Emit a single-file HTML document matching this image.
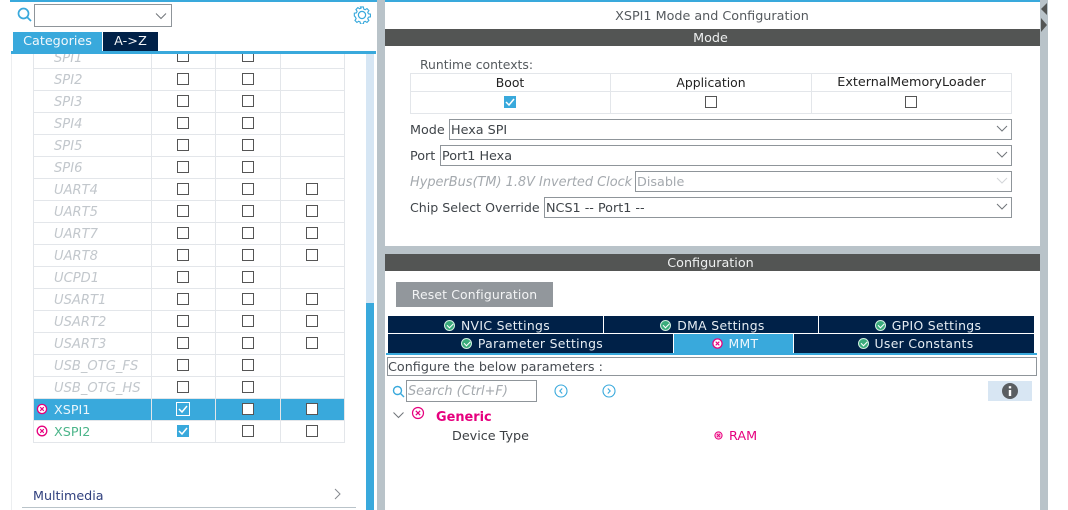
<!DOCTYPE html>
<html><head><meta charset="utf-8">
<style>
html,body{margin:0;padding:0;background:#fff}
#p{position:relative;width:1068px;height:510px;overflow:hidden;background:#fff;font-family:"DejaVu Sans",sans-serif;font-size:12.75px;color:#3f4449}
#p div,#p svg,#p span.a{position:absolute}
.t{white-space:nowrap;line-height:16px}
.r{left:33px;width:312px;height:1px;background:#e3e6ea}
.v{width:1px;background:#e3e6ea;top:46px;height:397px}
.c{width:10px;height:10px;border:1px solid #555;box-sizing:content-box;background:#fff}
.l{left:54px;font-style:italic;color:#c2c7cc;white-space:nowrap;line-height:18px;font-size:13.1px}
.sel{box-sizing:border-box;border:1px solid #8f959a;background:#fff;height:21px;padding:0 0 0 1px;line-height:21px;white-space:nowrap;color:#3f4449}
.tab{background:#002148;color:#e6edf3;text-align:center;line-height:20px;height:17px;white-space:nowrap;font-size:12.4px;letter-spacing:.33px;box-sizing:border-box;padding-left:3px}
.hd{background:#535554;color:#eef0f0;text-align:center;left:385px;width:655px;height:17px;line-height:20px;text-indent:-4px;overflow:hidden}
.ck{display:inline-block;position:relative;top:1px;width:11px;height:11px;border-radius:50%;background:#3aab7b;margin-right:6px;border:1px solid #cfeee0;box-sizing:border-box}
.ck:after{content:"";position:absolute;left:2px;top:1.5px;width:5px;height:2.5px;border-left:1.4px solid #fff;border-bottom:1.4px solid #fff;transform:rotate(-45deg)}
</style></head><body><div id="p">

<!-- bars -->
<div style="left:10px;top:0;width:367px;height:2px;background:#39a9dc"></div>
<div style="left:385px;top:0;width:655px;height:2px;background:#39a9dc"></div>
<div style="left:377px;top:0;width:8px;height:510px;background:#b9c3c9"></div>
<div style="left:1040px;top:0;width:8px;height:510px;background:#b9c3c9"></div>
<svg style="left:1040px;top:2px" width="8" height="32"><path d="M7 1V13L1 7Z" fill="#535554"/><path d="M1 16V30L7 23Z" fill="#535554"/></svg>

<!-- left top -->
<svg style="left:16px;top:6px" width="17" height="17" fill="none" stroke="#39a9dc" stroke-width="1.7"><circle cx="7.5" cy="7.5" r="5"/><path d="M11 11l4 4"/></svg>
<div style="left:34px;top:4px;width:138px;height:23px;box-sizing:border-box;border:1px solid #8f959a;background:#fff"></div>
<svg style="left:155px;top:12px" width="12" height="8" fill="none" stroke="#70757a" stroke-width="1"><path d="M1 1.5l5 5 5-5"/></svg>
<svg style="left:353px;top:6px" width="18" height="18" viewBox="0 0 18 18" fill="none" stroke="#39a9dc" stroke-width="1.2"><path d="M7.5 1h3l.4 2.2 1.5.7 1.9-1.2 2 2.1-1.2 1.8.7 1.6 2.2.4v2.8l-2.2.4-.7 1.6 1.2 1.8-2 2.1-1.9-1.2-1.5.7-.4 2.2h-3l-.4-2.2-1.5-.7-1.9 1.2-2-2.1 1.2-1.8-.7-1.6L1 10.4V7.6l2.2-.4.7-1.6-1.2-1.8 2-2.1 1.9 1.2 1.5-.7z" transform="scale(.95) translate(.4 .0)"/><circle cx="9" cy="9" r="3.6"/></svg>
<div class="t" style="left:13px;top:32px;width:89px;height:19px;background:#39a9dc;color:#f2f8fc;text-align:center;line-height:20px">Categories</div>
<div class="t" style="left:103px;top:32px;width:55px;height:19px;background:#002148;color:#f2f5f8;text-align:center;line-height:20px;letter-spacing:.1px">A-&gt;Z</div>
<div style="left:11px;top:51px;width:365px;height:3px;background:#39a9dc;z-index:3"></div>

<!-- left panel -->
<div style="left:11px;top:54px;width:1px;height:456px;background:#eceef0"></div>
<div style="left:366px;top:54px;width:8px;height:249px;background:#d6e6f4"></div>
<div style="left:366px;top:303px;width:8px;height:207px;background:#39a9dc"></div>

<div id="tbl" style="left:0;top:0;width:360px;height:443px">
<div style="left:33px;top:398px;width:312px;height:22px;background:#39a9dc"></div>
<div class="v" style="left:33px;top:54px;height:389px"></div>
<div class="v" style="left:151px;top:54px;height:389px"></div>
<div class="v" style="left:215px;top:54px;height:389px"></div>
<div class="v" style="left:280px;top:54px;height:389px"></div>
<div class="v" style="left:344px;top:54px;height:389px"></div>
<div class="r" style="top:68px"></div><div class="r" style="top:90px"></div><div class="r" style="top:112px"></div><div class="r" style="top:134px"></div><div class="r" style="top:156px"></div><div class="r" style="top:178px"></div><div class="r" style="top:200px"></div><div class="r" style="top:222px"></div><div class="r" style="top:244px"></div><div class="r" style="top:266px"></div><div class="r" style="top:288px"></div><div class="r" style="top:310px"></div><div class="r" style="top:332px"></div><div class="r" style="top:354px"></div><div class="r" style="top:376px"></div><div class="r" style="top:398px"></div><div class="r" style="top:420px"></div><div class="r" style="top:442px"></div>

<div style="left:33px;top:54px;width:312px;height:14px;overflow:hidden">
 <div class="l" style="left:21px;top:-4px">SPI1</div>
 <div class="c" style="left:144px;top:-4px"></div><div class="c" style="left:209px;top:-4px"></div>
</div>

<div class="l" style="top:72px">SPI2</div><div class="c" style="left:177px;top:73px"></div><div class="c" style="left:242px;top:73px"></div>
<div class="l" style="top:94px">SPI3</div><div class="c" style="left:177px;top:95px"></div><div class="c" style="left:242px;top:95px"></div>
<div class="l" style="top:116px">SPI4</div><div class="c" style="left:177px;top:117px"></div><div class="c" style="left:242px;top:117px"></div>
<div class="l" style="top:138px">SPI5</div><div class="c" style="left:177px;top:139px"></div><div class="c" style="left:242px;top:139px"></div>
<div class="l" style="top:160px">SPI6</div><div class="c" style="left:177px;top:161px"></div><div class="c" style="left:242px;top:161px"></div>
<div class="l" style="top:182px">UART4</div><div class="c" style="left:177px;top:183px"></div><div class="c" style="left:242px;top:183px"></div><div class="c" style="left:306px;top:183px"></div>
<div class="l" style="top:204px">UART5</div><div class="c" style="left:177px;top:205px"></div><div class="c" style="left:242px;top:205px"></div><div class="c" style="left:306px;top:205px"></div>
<div class="l" style="top:226px">UART7</div><div class="c" style="left:177px;top:227px"></div><div class="c" style="left:242px;top:227px"></div><div class="c" style="left:306px;top:227px"></div>
<div class="l" style="top:248px">UART8</div><div class="c" style="left:177px;top:249px"></div><div class="c" style="left:242px;top:249px"></div><div class="c" style="left:306px;top:249px"></div>
<div class="l" style="top:270px">UCPD1</div><div class="c" style="left:177px;top:271px"></div><div class="c" style="left:242px;top:271px"></div>
<div class="l" style="top:292px">USART1</div><div class="c" style="left:177px;top:293px"></div><div class="c" style="left:242px;top:293px"></div><div class="c" style="left:306px;top:293px"></div>
<div class="l" style="top:314px">USART2</div><div class="c" style="left:177px;top:315px"></div><div class="c" style="left:242px;top:315px"></div><div class="c" style="left:306px;top:315px"></div>
<div class="l" style="top:336px">USART3</div><div class="c" style="left:177px;top:337px"></div><div class="c" style="left:242px;top:337px"></div><div class="c" style="left:306px;top:337px"></div>
<div class="l" style="top:358px">USB_OTG_FS</div><div class="c" style="left:177px;top:359px"></div><div class="c" style="left:242px;top:359px"></div>
<div class="l" style="top:380px">USB_OTG_HS</div><div class="c" style="left:177px;top:381px"></div><div class="c" style="left:242px;top:381px"></div>

<!-- XSPI1 -->
<svg style="left:36px;top:403px" width="12" height="12" fill="none"><circle cx="6" cy="6" r="4.6" fill="#fff" stroke="#e6007e" stroke-width="1.3"/><path d="M4.2 4.2l3.6 3.6M7.8 4.2l-3.6 3.6" stroke="#e6007e" stroke-width="1.1"/></svg>
<div class="t" style="left:54px;top:403px;color:#eaf6fc">XSPI1</div>
<div style="left:176px;top:402px;width:12px;height:12px;border:1px solid #fff;background:#39a9dc"></div>
<svg style="left:177px;top:403px" width="12" height="12" fill="none" stroke="#fff" stroke-width="1.5"><path d="M2 6l3 3 5-6"/></svg>
<div class="c" style="left:242px;top:403px"></div><div class="c" style="left:306px;top:403px"></div>
<!-- XSPI2 -->
<svg style="left:36px;top:425px" width="12" height="12" fill="none"><circle cx="6" cy="6" r="4.8" stroke="#e6007e" stroke-width="1.3"/><path d="M4.2 4.2l3.6 3.6M7.8 4.2l-3.6 3.6" stroke="#e6007e" stroke-width="1.1"/></svg>
<div class="t" style="left:54px;top:425px;color:#4cb58a">XSPI2</div>
<div style="left:177px;top:425px;width:12px;height:12px;background:#39a9dc"></div>
<svg style="left:177px;top:425px" width="12" height="12" fill="none" stroke="#fff" stroke-width="1.5"><path d="M2 6l3 3 5-6"/></svg>
<div class="c" style="left:242px;top:425px"></div><div class="c" style="left:306px;top:425px"></div>
</div>

<div class="t" style="left:33px;top:488px;color:#2f3f7d;font-size:12.7px">Multimedia</div>
<svg style="left:333px;top:488px" width="10" height="12" fill="none" stroke="#85898e" stroke-width="1"><path d="M2 1l5 5-5 5"/></svg>
<div style="left:22px;top:507px;width:334px;height:1px;background:#b9c3c9"></div>

<!-- right -->
<div class="t" style="left:385px;top:9px;width:654px;text-align:center;color:#555a5e">XSPI1 Mode and Configuration</div>
<div class="hd" style="top:29px">Mode</div>

<div class="t" style="left:420px;top:57px;color:#555a5e;font-size:12.4px">Runtime contexts:</div>
<div style="left:410px;top:73px;width:602px;height:41px;box-sizing:border-box;border:1px solid #e3e6ea"></div>
<div style="left:410px;top:91px;width:602px;height:1px;background:#e3e6ea"></div>
<div style="left:610px;top:73px;width:1px;height:41px;background:#e3e6ea"></div>
<div style="left:811px;top:73px;width:1px;height:41px;background:#e3e6ea"></div>
<div class="t" style="left:410px;top:75px;width:200px;text-align:center;color:#222;font-size:12.4px">Boot</div>
<div class="t" style="left:611px;top:75px;width:200px;text-align:center;color:#222;font-size:12.4px">Application</div>
<div class="t" style="left:812px;top:75px;width:199px;text-align:center;color:#222">ExternalMemoryLoader</div>
<div style="left:504px;top:96px;width:12px;height:12px;background:#39a9dc"></div>
<svg style="left:504px;top:96px" width="12" height="12" fill="none" stroke="#fff" stroke-width="1.5"><path d="M2 6l3 3 5-6"/></svg>
<div class="c" style="left:705px;top:96px"></div>
<div class="c" style="left:905px;top:96px"></div>

<div class="t" style="left:410px;top:123px">Mode</div>
<div class="sel" style="left:449px;top:119px;width:563px">Hexa SPI</div>
<div class="t" style="left:410px;top:149px">Port</div>
<div class="sel" style="left:440px;top:145px;width:572px">Port1 Hexa</div>
<div class="t" style="left:410px;top:175px;font-style:italic;color:#a4a9ae;font-size:12.9px">HyperBus(TM) 1.8V Inverted Clock</div>
<div class="sel" style="left:635px;top:171px;width:377px;color:#a4a9ae">Disable</div>
<div class="t" style="left:410px;top:200px;font-size:12.6px">Chip Select Override</div>
<div class="sel" style="left:544px;top:197px;width:468px">NCS1 -- Port1 --</div>
<svg style="left:996px;top:125px" width="12" height="8" fill="none" stroke="#70757a"><path d="M1 1l5 5 5-5"/></svg>
<svg style="left:996px;top:151px" width="12" height="8" fill="none" stroke="#70757a"><path d="M1 1l5 5 5-5"/></svg>
<svg style="left:996px;top:177px" width="12" height="8" fill="none" stroke="#d3d6d9"><path d="M1 1l5 5 5-5"/></svg>
<svg style="left:996px;top:203px" width="12" height="8" fill="none" stroke="#70757a"><path d="M1 1l5 5 5-5"/></svg>

<div style="left:385px;top:246px;width:655px;height:8px;background:#b9c3c9"></div>
<div class="hd" style="top:254px">Configuration</div>

<div class="t" style="left:396px;top:282px;width:157px;height:25px;background:#92979c;color:#f3f4f5;text-align:center;line-height:26px;font-size:12.4px;letter-spacing:.15px">Reset Configuration</div>

<div class="tab" style="left:388px;top:316px;width:215px"><span class="ck"></span>NVIC Settings</div>
<div class="tab" style="left:604px;top:316px;width:214px"><span class="ck"></span>DMA Settings</div>
<div class="tab" style="left:819px;top:316px;width:215px"><span class="ck"></span>GPIO Settings</div>
<div class="tab" style="left:388px;top:334px;width:285px;height:19px"><span class="ck"></span>Parameter Settings</div>
<div class="tab" style="left:674px;top:334px;width:119px;height:19px;background:#39a9dc;color:#eef7fc"><svg style="position:static;display:inline-block;vertical-align:-1px;margin-right:6px" width="11" height="11" fill="none"><circle cx="5.5" cy="5.5" r="4.6" fill="#fff" stroke="#e6007e" stroke-width="1.3"/><path d="M3.7 3.7l3.6 3.6M7.3 3.7l-3.6 3.6" stroke="#e6007e" stroke-width="1.1"/></svg>MMT</div>
<div class="tab" style="left:794px;top:334px;width:240px;height:19px"><span class="ck"></span>User Constants</div>
<div style="left:386px;top:353px;width:651px;height:2px;background:#39a9dc"></div>

<div class="sel" style="left:387px;top:357px;width:650px;height:19px;line-height:20px;padding-left:0;color:#454a50">Configure the below parameters :</div>

<svg style="left:392px;top:385px" width="13" height="13" fill="none" stroke="#39a9dc" stroke-width="1.4"><circle cx="5.5" cy="5.5" r="4"/><path d="M8.5 8.5l3.5 3.5"/></svg>
<div class="sel" style="left:406px;top:380px;width:131px;height:22px;line-height:22px;font-style:italic;color:#a4a9ae;font-size:12.9px">Search (Ctrl+F)</div>
<svg style="left:554px;top:384px" width="14" height="14" fill="none" stroke="#39a9dc" stroke-width="1.1"><circle cx="7" cy="7" r="6"/><path d="M8.2 4.5L5.8 7l2.4 2.5"/></svg>
<svg style="left:602px;top:384px" width="14" height="14" fill="none" stroke="#39a9dc" stroke-width="1.1"><circle cx="7" cy="7" r="6"/><path d="M5.8 4.5L8.2 7 5.8 9.5"/></svg>
<div style="left:988px;top:381px;width:44px;height:20px;background:#d8e6f3"></div>
<svg style="left:1002px;top:383px" width="16" height="16"><circle cx="8" cy="8" r="8" fill="#5a5e62"/><rect x="6.8" y="7" width="2.4" height="6" fill="#fff"/><rect x="6.8" y="3.2" width="2.4" height="2.2" fill="#fff"/></svg>

<svg style="left:392px;top:411px" width="13" height="9" fill="none" stroke="#70757a" stroke-width="1"><path d="M1.5 1.5l5 5 5-5"/></svg>
<svg style="left:411px;top:406px" width="14" height="14" fill="none" stroke="#e6007e" stroke-width="1.2"><circle cx="7" cy="7" r="5.5"/><path d="M4.8 4.8l4.4 4.4M9.2 4.8l-4.4 4.4"/></svg>
<div class="t" style="left:436px;top:410px;color:#e6007e;font-weight:bold;font-size:12.9px">Generic</div>
<div class="t" style="left:452px;top:429px;color:#3b3f43">Device Type</div>
<svg style="left:714px;top:431px" width="9" height="9" fill="none"><circle cx="4.5" cy="4.5" r="3.6" fill="#fbd" stroke="#e6007e" stroke-width="1"/><path d="M3 3l3 3M6 3l-3 3" stroke="#e6007e" stroke-width=".9"/></svg>
<div class="t" style="left:729px;top:429px;color:#e6007e">RAM</div>
</div></body></html>
